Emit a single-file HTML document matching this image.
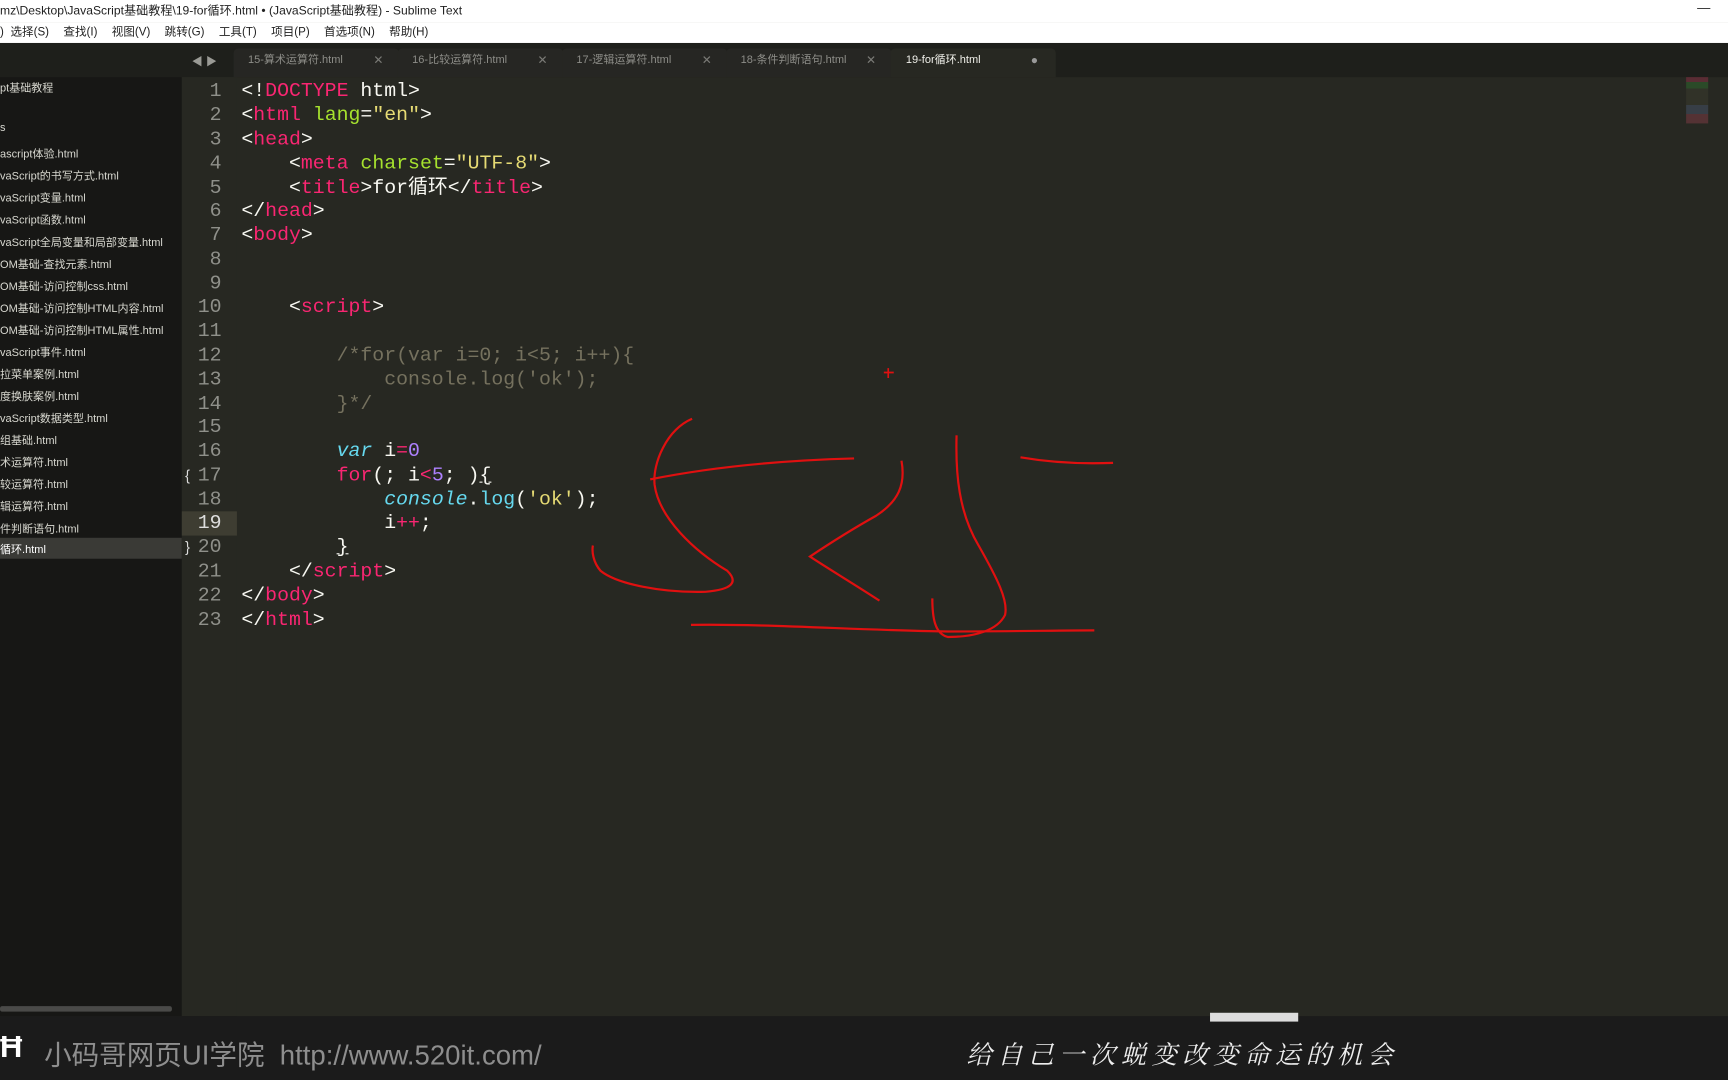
<!DOCTYPE html>
<html><head><meta charset="utf-8">
<style>
html,body{margin:0;padding:0;width:1728px;height:1080px;overflow:hidden;background:#272822;}
#w{position:absolute;left:0;top:0;width:1568px;height:980px;transform:scale(1.10204);transform-origin:0 0;font-family:"Liberation Sans","Noto Sans CJK SC",sans-serif;}
.abs{position:absolute}
#title{left:0;top:0;width:1568px;height:20px;background:#fff;font-size:11px;color:#222;line-height:20px}
#menu{left:0;top:20px;width:1568px;height:19px;background:#fff;font-size:10.5px;color:#222;line-height:19px}
#menu span{margin-right:13px}
#tabs{left:0;top:39px;width:1568px;height:31px;background:#1e1f1b}
.tab{position:absolute;top:5px;height:26px;width:150px;background:#262623;color:#8d8d88;font-size:10px;line-height:22px;border-radius:4px 4px 0 0}
.tab .x{position:absolute;right:14px;top:0;color:#7a7a76;font-size:11px}
#side{left:0;top:70px;width:165px;height:852px;background:#171715;color:#d8d8d0;font-size:10px}
#side div{position:absolute;left:0;white-space:nowrap}
#gut{left:165px;top:70px;width:50px;height:852px;background:#272822}
.ln{position:absolute;right:14px;width:40px;text-align:right;color:#8f908a;font-family:"Liberation Mono",monospace;font-size:18px}
#code{left:219px;top:72px;font-family:"Liberation Mono","Noto Sans CJK SC",monospace;font-size:18px;color:#f8f8f2;white-space:pre}
.l{position:absolute;left:0;height:22px;line-height:22px}
.p{color:#f92672}.g{color:#a6e22e}.y{color:#e6db74}.v{color:#ae81ff}.c{color:#66d9ef;font-style:italic}.cm{color:#75715e}.cy{color:#66d9ef}
#bot{left:0;top:922px;width:1568px;height:58px;background:#1b1b1b}
</style></head><body><div id="w">
<div id="title" class="abs">mz\Desktop\JavaScript基础教程\19-for循环.html • (JavaScript基础教程) - Sublime Text</div>
<div id="menu" class="abs"><span style="margin-right:6px">)</span><span>选择(S)</span><span>查找(I)</span><span>视图(V)</span><span>跳转(G)</span><span>工具(T)</span><span>项目(P)</span><span>首选项(N)</span><span>帮助(H)</span></div>
<div class="abs" style="left:1540px;top:0;color:#222;font-size:12px">—</div>
<div id="tabs" class="abs">
<div class="abs" style="left:174px;top:8px;color:#9a9a95;font-size:10px">◀ ▶</div>
<div class="tab" style="left:212px"><span style="margin-left:13px">15-算术运算符.html</span><span class="x">✕</span></div>
<div class="tab" style="left:361px"><span style="margin-left:13px">16-比较运算符.html</span><span class="x">✕</span></div>
<div class="tab" style="left:510px"><span style="margin-left:13px">17-逻辑运算符.html</span><span class="x">✕</span></div>
<div class="tab" style="left:659px"><span style="margin-left:13px">18-条件判断语句.html</span><span class="x">✕</span></div>
<div class="tab" style="left:808px;background:#272822;color:#f0f0ea"><span style="margin-left:14px">19-for循环.html</span><span class="x" style="color:#999;right:16px">●</span></div>
</div>
<div id="side" class="abs">
<div style="top:1px">pt基础教程</div>
<div style="top:41px">s</div>
<div style="top:61px">ascript体验.html</div>
<div style="top:81px">vaScript的书写方式.html</div>
<div style="top:101px">vaScript变量.html</div>
<div style="top:121px">vaScript函数.html</div>
<div style="top:141px">vaScript全局变量和局部变量.html</div>
<div style="top:161px">OM基础-查找元素.html</div>
<div style="top:181px">OM基础-访问控制css.html</div>
<div style="top:201px">OM基础-访问控制HTML内容.html</div>
<div style="top:221px">OM基础-访问控制HTML属性.html</div>
<div style="top:241px">vaScript事件.html</div>
<div style="top:261px">拉菜单案例.html</div>
<div style="top:281px">度换肤案例.html</div>
<div style="top:301px">vaScript数据类型.html</div>
<div style="top:321px">组基础.html</div>
<div style="top:341px">术运算符.html</div>
<div style="top:361px">较运算符.html</div>
<div style="top:381px">辑运算符.html</div>
<div style="top:401px">件判断语句.html</div>
<div style="top:418px;width:165px;height:19px;background:#3a3a36"></div>
<div style="top:420px;color:#fff">循环.html</div>
<div style="top:843px;width:156px;height:5px;background:#4a4a48;border-radius:2px"></div>
</div>
<div id="gut" class="abs">
<div class="abs" style="left:0;top:394px;width:50px;height:22px;background:#3e3d32"></div>
<div style="position:absolute;top:2px;left:0;width:50px">
<div class="ln" style="top:0px;line-height:22px">1</div><div class="ln" style="top:22px;line-height:22px">2</div><div class="ln" style="top:44px;line-height:22px">3</div><div class="ln" style="top:66px;line-height:22px">4</div><div class="ln" style="top:88px;line-height:22px">5</div><div class="ln" style="top:109px;line-height:22px">6</div><div class="ln" style="top:131px;line-height:22px">7</div><div class="ln" style="top:153px;line-height:22px">8</div><div class="ln" style="top:175px;line-height:22px">9</div><div class="ln" style="top:196px;line-height:22px">10</div><div class="ln" style="top:218px;line-height:22px">11</div><div class="ln" style="top:240px;line-height:22px">12</div><div class="ln" style="top:262px;line-height:22px">13</div><div class="ln" style="top:284px;line-height:22px">14</div><div class="ln" style="top:305px;line-height:22px">15</div><div class="ln" style="top:327px;line-height:22px">16</div><div class="ln" style="top:349px;line-height:22px">17</div><div class="ln" style="top:371px;line-height:22px">18</div><div class="ln" style="top:392px;line-height:22px;color:#ddd">19</div><div class="ln" style="top:414px;line-height:22px">20</div><div class="ln" style="top:436px;line-height:22px">21</div><div class="ln" style="top:458px;line-height:22px">22</div><div class="ln" style="top:480px;line-height:22px">23</div>
<div class="abs" style="left:3px;top:349px;color:#ddd;font-size:13px;line-height:22px">{</div>
<div class="abs" style="left:3px;top:414px;color:#ddd;font-size:13px;line-height:22px">}</div>
</div>
</div>
<div id="code" class="abs">
<div class="l" style="top:0">&lt;!<span class="p">DOCTYPE</span> html&gt;</div>
<div class="l" style="top:22px">&lt;<span class="p">html</span> <span class="g">lang</span>=<span class="y">"en"</span>&gt;</div>
<div class="l" style="top:44px">&lt;<span class="p">head</span>&gt;</div>
<div class="l" style="top:66px">    &lt;<span class="p">meta</span> <span class="g">charset</span>=<span class="y">"UTF-8"</span>&gt;</div>
<div class="l" style="top:88px">    &lt;<span class="p">title</span>&gt;for循环&lt;/<span class="p">title</span>&gt;</div>
<div class="l" style="top:109px">&lt;/<span class="p">head</span>&gt;</div>
<div class="l" style="top:131px">&lt;<span class="p">body</span>&gt;</div>
<div class="l" style="top:196px">    &lt;<span class="p">script</span>&gt;</div>
<div class="l cm" style="top:240px">        /*for(var i=0; i&lt;5; i++){</div>
<div class="l cm" style="top:262px">            console.log('ok');</div>
<div class="l cm" style="top:284px">        }*/</div>
<div class="l" style="top:327px">        <span class="c">var</span> i<span class="p">=</span><span class="v">0</span></div>
<div class="l" style="top:349px">        <span class="p">for</span>(; i<span class="p">&lt;</span><span class="v">5</span>; )<u>{</u></div>
<div class="l" style="top:371px">            <span class="c">console</span>.<span class="cy">log</span>(<span class="y">'ok'</span>);</div>
<div class="l" style="top:392px">            i<span class="p">++</span>;</div>
<div class="l" style="top:414px">        <u>}</u></div>
<div class="l" style="top:436px">    &lt;/<span class="p">script</span>&gt;</div>
<div class="l" style="top:458px">&lt;/<span class="p">body</span>&gt;</div>
<div class="l" style="top:480px">&lt;/<span class="p">html</span>&gt;</div>
</div>
<div class="abs" style="left:1530px;top:70px;width:20px;height:42px;opacity:.35;background:linear-gradient(#b35 0 10%,#383 10% 25%,#443 25% 60%,#568 60% 80%,#a45 80%)"></div>
<svg class="abs" style="left:0;top:0" width="1568" height="980" viewBox="0 0 1568 980" fill="none" stroke="#e01010" stroke-width="2">
<path d="M628,380 C605,390 592,420 594,440 C598,470 630,500 660,518 C670,528 665,535 640,537 C600,538 560,530 545,518 C538,510 537,500 538,495"/>
<path d="M590,435 C640,425 700,418 775,416"/>
<path d="M818,418 C822,440 815,455 795,468 C770,482 750,495 735,505 C750,515 775,530 798,545"/>
<path d="M868,395 C867,430 870,465 888,495 C905,525 915,545 912,558 C905,572 885,578 860,578 C848,575 846,560 846,543"/>
<path d="M926,415 C955,420 985,421 1010,420"/>
<path d="M627,567 C700,566 780,572 860,573 C920,573 960,572 993,572"/>
<path d="M802,338 h9 M806,334 v9" stroke-width="1.5"/>
</svg>
<div id="bot" class="abs">
<div class="abs" style="left:1098px;top:-3px;width:80px;height:8px;background:#ddd"></div>
<div class="abs" style="left:0;top:12px;color:#fff;font-size:28px;font-weight:bold">Ħ</div>
<div class="abs" style="left:40px;top:16px;color:#8e8e8e;font-size:25px;white-space:nowrap">小码哥网页UI学院 &nbsp;http://www.520it.com/</div>
<div class="abs" style="left:877px;top:17px;color:#eee;font-size:23px;letter-spacing:5px;font-family:'Noto Serif CJK SC',serif;font-style:italic;white-space:nowrap">给自己一次蜕变改变命运的机会</div>
</div>
</div></body></html>
